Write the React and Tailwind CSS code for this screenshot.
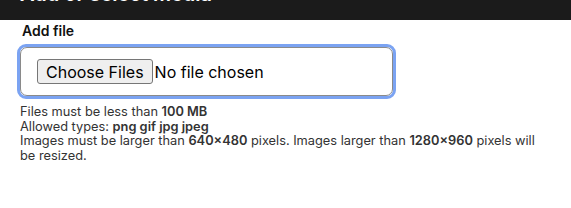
export default function App() {
  return (
    <div className="w-[571px] h-[208px] bg-white font-['Inter',Arial,sans-serif] text-[#222]">
      <div className="h-[20px] bg-[#1b1b1b] overflow-hidden px-[20px]">
        <div className="-mt-[18px] text-white text-[20px] font-semibold leading-[24px]">Add or select media</div>
      </div>
      <div className="px-[17px] pt-[2px]">
        <div className="pl-[5px] text-[14px] font-semibold leading-[18px] text-[#111]">Add file</div>
        <div className="mt-[4px] w-[379px] h-[55px] rounded-[9px] border-[3px] border-[#7ba3f2] p-0">
          <div className="h-full rounded-[7px] border border-[#8a8a8a] flex items-center pl-[16px]">
            <span className="h-[25px] px-[8px] flex items-center bg-[#efefef] border border-[#767676] rounded-[3px] text-[16px] text-black">Choose Files</span>
            <span className="ml-[2px] text-[16px] text-black">No file chosen</span>
          </div>
        </div>
        <div className="pl-[3px] pr-[4px] mt-[6px] text-[12.8px] leading-[14.7px] text-[#333]">
          <div>Files must be less than <b className="font-semibold">100 MB</b></div>
          <div>Allowed types: <b className="font-semibold">png gif jpg jpeg</b></div>
          <div>Images must be larger than <b className="font-semibold">640×480</b> pixels. Images larger than <b className="font-semibold">1280×960</b> pixels will be resized.</div>
        </div>
      </div>
    </div>
  );
}
